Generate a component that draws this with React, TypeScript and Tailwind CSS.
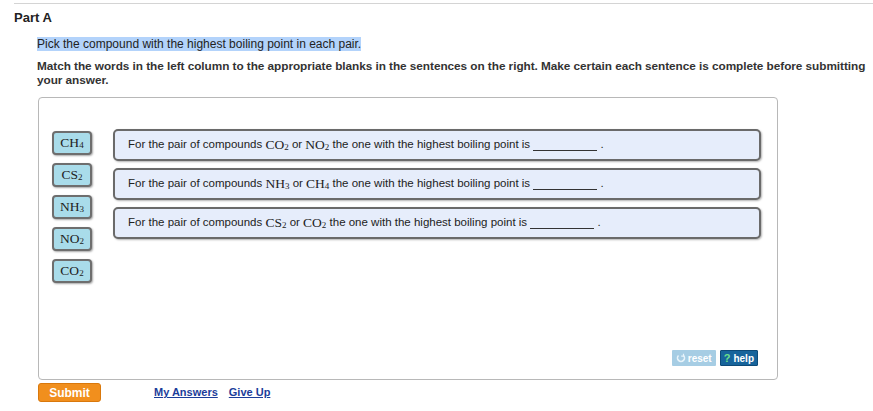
import React from "react";

const chips = [
	["CH", "4"],
	["CS", "2"],
	["NH", "3"],
	["NO", "2"],
	["CO", "2"],
];

const sentences = [
	[["CO", "2"], ["NO", "2"]],
	[["NH", "3"], ["CH", "4"]],
	[["CS", "2"], ["CO", "2"]],
];

function Formula({ base, sub }: { base: string; sub: string }) {
	return (
		<span className="font-['Liberation_Serif',serif] text-[13.5px] text-[#222]">
			{base}
			<sub className="text-[9px] relative top-[1px]">{sub}</sub>
		</span>
	);
}

export default function App() {
	return (
		<div className="w-[873px] h-[411px] bg-white font-['Liberation_Sans',Arial,sans-serif] text-[#222] overflow-hidden">
			<div className="ml-[14px] mt-[3px] border-t border-[#d4d4d4] pt-[6px]">
				<h2 className="text-[13px] font-bold leading-[16px] text-[#222]">Part A</h2>
			</div>
			<div className="pl-[37px] pt-[11px]">
				<p className="text-[12px] leading-[14px]">
					<span className="bg-[#b3d3fb]">Pick the compound with the highest boiling point in each pair.</span>
				</p>
				<p className="mt-[8px] text-[11.8px] leading-[14px] font-bold text-[#333] tracking-[-0.05px]">
					Match the words in the left column to the appropriate blanks in the sentences on the right. Make certain each sentence is complete before submitting your answer.
				</p>

				<div className="mt-[10px] ml-[1px] w-[740px] h-[283px] border border-[#b8b8b8] rounded-[4px] flex flex-col">
					<div className="flex flex-row pl-[13px] pt-[33px] gap-[21px]">
						<div className="flex flex-col gap-[8px]">
							{chips.map(([b, s]) => (
								<div
									key={b + s}
									className="w-[40px] h-[24px] flex items-center justify-center bg-[#a9dcea] border-2 border-[#6e6e6e] rounded-[4px] shadow-[1px_1px_2px_rgba(0,0,0,0.35)]"
								>
									<Formula base={b} sub={s} />
								</div>
							))}
						</div>
						<div className="flex flex-col gap-[7px] -mt-[2px]">
							{sentences.map((pair, i) => (
								<div
									key={i}
									className="w-[648px] h-[32px] flex items-center pl-[13px] bg-[#e6edfb] border-2 border-[#6a6a6a] rounded-[5px] shadow-[1px_1px_2px_rgba(0,0,0,0.3)] text-[11.5px] text-[#222] whitespace-pre"
								>
									<span>For the pair of compounds </span>
									<Formula base={pair[0][0]} sub={pair[0][1]} />
									<span> or </span>
									<Formula base={pair[1][0]} sub={pair[1][1]} />
									<span> the one with the highest boiling point is </span>
									<span className="inline-block w-[64px] border-b border-[#333] h-[9px] mb-[-2px]" />
									<span> .</span>
								</div>
							))}
						</div>
					</div>
					<div className="mt-auto flex flex-row justify-end gap-[4px] pr-[19px] pb-[13px]">
						<div className="h-[16px] px-[4px] flex items-center gap-[2px] bg-[#a6cde4] text-white text-[10px] font-bold rounded-[1px]">
							<svg width="10" height="10" viewBox="0 0 10 10" fill="none">
								<path d="M2.5 2.5 A3.5 3.5 0 1 0 7.5 2.5" stroke="#e8f4fb" strokeWidth="1.6" />
								<path d="M7.5 0.8 L7.5 3.2 L5.2 3.2" stroke="#e8f4fb" strokeWidth="1.2" />
							</svg>
							<span>reset</span>
						</div>
						<div className="h-[16px] px-[3px] flex items-center gap-[3px] bg-[#17649b] text-white text-[10px] font-bold rounded-[1px] border border-[#0d4a78]">
							<span className="text-[#6fe08a] text-[11px]">?</span>
							<span>help</span>
						</div>
					</div>
				</div>

				<div className="mt-[3px] ml-[1px] flex flex-row items-center">
					<button
						type="button"
						className="w-[63px] h-[19px] bg-[#f18f1d] border border-[#d9780c] rounded-[3px] text-white text-[12px] font-bold leading-none"
					>
						Submit
					</button>
					<a className="ml-[53px] text-[11px] font-bold text-[#1b3d9a] underline">My Answers</a>
					<a className="ml-[11px] text-[11px] font-bold text-[#1b3d9a] underline">Give Up</a>
				</div>
			</div>
		</div>
	);
}
